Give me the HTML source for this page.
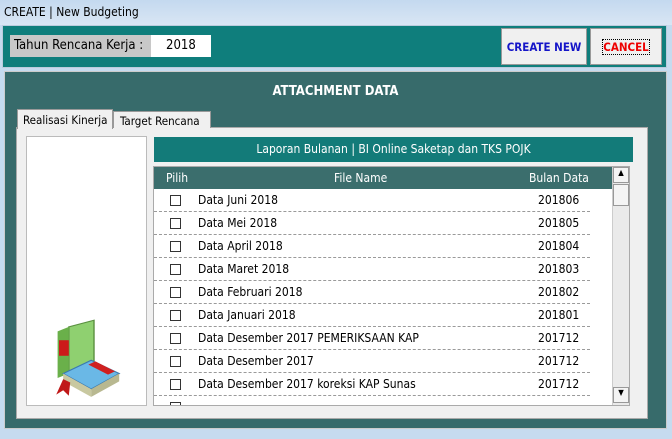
<!DOCTYPE html>
<html><head><style>
*{margin:0;padding:0;box-sizing:border-box}
body{width:672px;height:439px;overflow:hidden;background:#c6dbef;font-family:"DejaVu Sans Condensed","Liberation Sans",sans-serif;position:relative;font-size:12px}
.a{position:absolute;white-space:nowrap}
.title{left:0;top:0;width:672px;height:25px;background:linear-gradient(#c4d9ef,#d9e6f4);color:#000;padding:5px 0 0 4px;font-size:12px}
.top{left:2px;top:25px;width:665px;height:43px;background:#0f7e7c;border:1px solid #bcd}
.btn{background:#f0f0f0;border:1px solid #999;font-weight:bold;font-size:11.5px;text-align:center;font-family:"DejaVu Sans Condensed",sans-serif}
.low{left:4px;top:71px;width:663px;height:358px;background:#376b6b;border:1px solid #ccc}
.row{position:absolute;left:0;width:436px;height:23px;border-bottom:1px dashed #9a9a9a}
.cb{position:absolute;left:16px;top:6px;width:11px;height:11px;border:1px solid #333;background:#fff}
.fn{position:absolute;left:44px;top:4px}
.bd{position:absolute;left:384px;top:4px}
</style></head><body>
<div class="a title">CREATE | New Budgeting</div>
<div class="a top"></div>
<div class="a" style="left:10px;top:35px;width:141px;height:22px;background:#c8c8c8;padding:3px 0 0 4px;font-size:13px">Tahun Rencana Kerja :</div>
<div class="a" style="left:151px;top:35px;width:60px;height:22px;background:#fff;padding:3px 0 0 15px;font-size:13px">2018</div>
<div class="a btn" style="left:501px;top:28px;width:86px;height:37px;color:#1515c8;padding-top:11px">CREATE NEW</div>
<div class="a btn" style="left:590px;top:28px;width:72px;height:37px;color:#e00;padding-top:11px"><span style="outline:1px dotted #000">CANCEL</span></div>
<div class="a low"></div>
<div class="a" style="left:4px;top:84px;width:663px;text-align:center;color:#fff;font-weight:bold;font-size:13px;font-family:'DejaVu Sans Condensed',sans-serif">ATTACHMENT DATA</div>
<div class="a" style="left:16px;top:127px;width:632px;height:292px;background:#f0f0f0;border:1px solid #aaa"></div>
<div class="a" style="left:17px;top:109px;width:96px;height:20px;background:#f0f0f0;border:1px solid #999;border-bottom:none;padding:3px 0 0 5px;font-size:11.5px">Realisasi Kinerja</div>
<div class="a" style="left:113px;top:111px;width:98px;height:17px;background:#f0f0f0;border:1px solid #999;border-bottom:none;padding:2px 0 0 6px;font-size:11.5px">Target Rencana</div>
<div class="a" style="left:26px;top:136px;width:121px;height:270px;background:#fff;border:1px solid #bbb"></div>
<svg class="a" style="left:52px;top:318px" width="70" height="80" viewBox="0 0 50 72" preserveAspectRatio="none">
<polygon points="12,8 30,2 30,45 12,50" fill="#8fd070" stroke="#5a9040"/>
<polygon points="4,12 12,8 12,50 4,54" fill="#6ab04a"/>
<rect x="5" y="20" width="7" height="14" fill="#cc1a1a"/>
<polygon points="8,50 28,38 48,50 28,64" fill="#6ab8e6" stroke="#3a7ab0"/>
<polygon points="8,50 28,64 28,71 8,57" fill="#c8c8a0"/>
<polygon points="28,64 48,50 48,57 28,71" fill="#b8b890"/>
<polygon points="26,42 31,39 45,48 40,51" fill="#d02020"/>
<polygon points="8,55 13,58 12,70 8,65 3,69" fill="#c01818"/>
</svg>
<div class="a" style="left:154px;top:137px;width:479px;height:25px;background:#137b79;color:#fff;text-align:center;padding-top:5px">Laporan Bulanan | BI Online Saketap dan TKS POJK</div>
<div class="a" style="left:153px;top:166px;width:477px;height:240px;background:#fff;border:1px solid #aaa;overflow:hidden">
<div class="a" style="left:0;top:0;width:458px;height:22px;background:#3b6e6d;color:#fff">
<span class="a" style="left:12px;top:4px">Pilih</span><span class="a" style="left:180px;top:4px">File Name</span><span class="a" style="left:375px;top:4px">Bulan Data</span></div>
<div class="a" style="left:458px;top:0;width:17px;height:238px;background:#eaeaea;border-left:1px solid #ccc">
<div class="a" style="left:0;top:0;width:16px;height:16px;background:#f4f4f4;border:1px solid #999;font-size:8px;text-align:center">▲</div>
<div class="a" style="left:0;top:17px;width:16px;height:22px;background:#f4f4f4;border:1px solid #999"></div>
<div class="a" style="left:0;top:220px;width:16px;height:16px;background:#f4f4f4;border:1px solid #999;font-size:8px;text-align:center">▼</div></div>
<div class="row" style="top:22px"><div class="cb"></div><span class="fn">Data Juni 2018</span><span class="bd">201806</span></div>
<div class="row" style="top:45px"><div class="cb"></div><span class="fn">Data Mei 2018</span><span class="bd">201805</span></div>
<div class="row" style="top:68px"><div class="cb"></div><span class="fn">Data April 2018</span><span class="bd">201804</span></div>
<div class="row" style="top:91px"><div class="cb"></div><span class="fn">Data Maret 2018</span><span class="bd">201803</span></div>
<div class="row" style="top:114px"><div class="cb"></div><span class="fn">Data Februari 2018</span><span class="bd">201802</span></div>
<div class="row" style="top:137px"><div class="cb"></div><span class="fn">Data Januari 2018</span><span class="bd">201801</span></div>
<div class="row" style="top:160px"><div class="cb"></div><span class="fn">Data Desember 2017 PEMERIKSAAN KAP</span><span class="bd">201712</span></div>
<div class="row" style="top:183px"><div class="cb"></div><span class="fn">Data Desember 2017</span><span class="bd">201712</span></div>
<div class="row" style="top:206px"><div class="cb"></div><span class="fn">Data Desember 2017 koreksi KAP Sunas</span><span class="bd">201712</span></div>
<div class="row" style="top:229px;border:none"><div class="cb"></div></div>
</div>
</body></html>
